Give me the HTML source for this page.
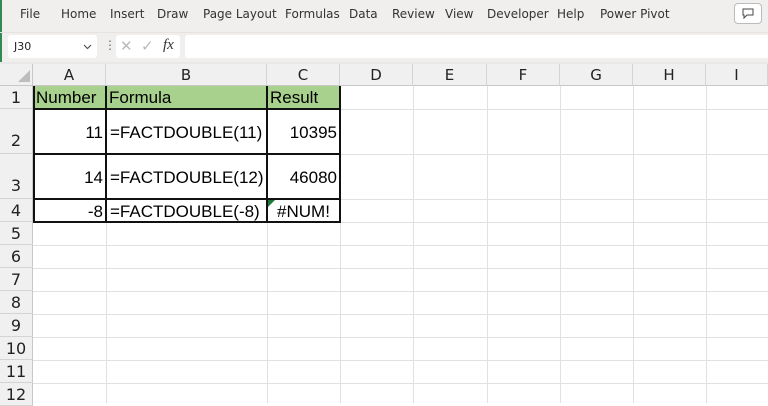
<!DOCTYPE html>
<html><head><meta charset="utf-8"><style>
*{margin:0;padding:0;box-sizing:border-box}
body{width:768px;height:403px;overflow:hidden;background:#fff;position:relative;font-family:"Liberation Sans",sans-serif}
.a{position:absolute}
.tab{position:absolute;top:7px;color:#333;font-family:"DejaVu Sans","Liberation Sans",sans-serif;font-size:12px}
.ch{position:absolute;top:64px;height:22px;background:#f0f0f0;border-right:1px solid #d4d4d4;border-bottom:1px solid #c8c8c8;text-align:center;line-height:22px;color:#222;font-family:"DejaVu Sans",sans-serif;font-size:15px}
.rh{position:absolute;left:0;width:33px;background:#f0f0f0;border-bottom:1px solid #d4d4d4;border-right:1px solid #c8c8c8;font-size:16px;color:#222;text-align:center;font-family:"DejaVu Sans",sans-serif}
.hl{position:absolute;left:33px;right:0;height:1px;background:#e1e1e1}
.vl{position:absolute;top:86px;bottom:0;width:1px;background:#e1e1e1}
.c{position:absolute;font-size:17px;color:#000;white-space:nowrap;padding:0 3px}
</style></head><body>
<div class="a" style="left:0;top:0;width:768px;height:62px;background:#f1efed"></div>
<div class="a" style="left:0;top:0;width:2px;height:403px;background:#2f8a53"></div>
<span class="tab" style="left:20px">File</span>
<span class="tab" style="left:61px">Home</span>
<span class="tab" style="left:110px">Insert</span>
<span class="tab" style="left:157px">Draw</span>
<span class="tab" style="left:203px">Page Layout</span>
<span class="tab" style="left:285px">Formulas</span>
<span class="tab" style="left:349px">Data</span>
<span class="tab" style="left:392px">Review</span>
<span class="tab" style="left:445px">View</span>
<span class="tab" style="left:487px">Developer</span>
<span class="tab" style="left:557px">Help</span>
<span class="tab" style="left:600px">Power Pivot</span>
<div class="a" style="left:734px;top:3px;width:28px;height:21px;border:1px solid #bbb;border-radius:4px;background:#fff"></div>
<svg class="a" style="left:742px;top:8px" width="12" height="11" viewBox="0 0 12 11"><path d="M1 1h10v6H5l-3 3V7H1z" fill="none" stroke="#444" stroke-width="1"/></svg>
<div class="a" style="left:0;top:32px;width:768px;height:1px;background:#e6e3e0"></div>
<div class="a" style="left:8px;top:35px;width:89px;height:23px;background:#fff;border-radius:3px;font-size:11px;line-height:23px;padding-left:6px;color:#222;font-family:'DejaVu Sans',sans-serif">J30</div>
<svg class="a" style="left:83px;top:44px" width="9" height="6"><path d="M1 1l3.5 3.5L8 1" fill="none" stroke="#555" stroke-width="1.2"/></svg>
<div class="a" style="left:104px;top:38px;font-size:12px;color:#666">&#8942;</div>
<div class="a" style="left:116px;top:35px;width:64px;height:23px;background:#fff;border-radius:3px"></div>
<div class="a" style="left:120px;top:37px;font-size:15px;color:#bbb">&#x2715;</div>
<div class="a" style="left:141px;top:37px;font-size:15px;color:#bbb">&#x2713;</div>
<div class="a" style="left:163px;top:37px;font-size:15px;font-style:italic;font-family:'Liberation Serif',serif;color:#333">fx</div>
<div class="a" style="left:185px;top:35px;width:583px;height:23px;background:#fff;border-radius:3px 0 0 3px"></div>
<div class="a" style="left:0;top:62px;width:768px;height:2px;background:#e8e8e8"></div>
<div class="a" style="left:0;top:64px;width:33px;height:22px;background:#f0f0f0;border-right:1px solid #c8c8c8;border-bottom:1px solid #c8c8c8"></div>
<svg class="a" style="left:18px;top:70px" width="12" height="12"><path d="M12 0V12H0z" fill="#bdbdbd"/></svg>
<div class="ch" style="left:33px;width:73px">A</div>
<div class="ch" style="left:106px;width:161px">B</div>
<div class="ch" style="left:267px;width:73px">C</div>
<div class="ch" style="left:340px;width:73px">D</div>
<div class="ch" style="left:413px;width:74px">E</div>
<div class="ch" style="left:487px;width:73px">F</div>
<div class="ch" style="left:560px;width:73px">G</div>
<div class="ch" style="left:633px;width:73px">H</div>
<div class="ch" style="left:706px;width:62px">I</div>
<div class="vl" style="left:106px"></div><div class="vl" style="left:267px"></div><div class="vl" style="left:340px"></div><div class="vl" style="left:413px"></div><div class="vl" style="left:487px"></div><div class="vl" style="left:560px"></div><div class="vl" style="left:633px"></div><div class="vl" style="left:706px"></div>
<div class="hl" style="top:109px"></div><div class="hl" style="top:154px"></div><div class="hl" style="top:199px"></div><div class="hl" style="top:222px"></div><div class="hl" style="top:245px"></div><div class="hl" style="top:268px"></div><div class="hl" style="top:291px"></div><div class="hl" style="top:314px"></div><div class="hl" style="top:337px"></div><div class="hl" style="top:360px"></div><div class="hl" style="top:383px"></div>
<div class="rh" style="top:86px;height:23px;line-height:23px">1</div>
<div class="rh" style="top:109px;height:45px;line-height:64px">2</div>
<div class="rh" style="top:154px;height:45px;line-height:64px">3</div>
<div class="rh" style="top:199px;height:23px;line-height:23px">4</div>
<div class="rh" style="top:222px;height:23px;line-height:23px">5</div>
<div class="rh" style="top:245px;height:23px;line-height:23px">6</div>
<div class="rh" style="top:268px;height:23px;line-height:23px">7</div>
<div class="rh" style="top:291px;height:23px;line-height:23px">8</div>
<div class="rh" style="top:314px;height:23px;line-height:23px">9</div>
<div class="rh" style="top:337px;height:23px;line-height:23px">10</div>
<div class="rh" style="top:360px;height:23px;line-height:23px">11</div>
<div class="rh" style="top:383px;height:23px;line-height:23px">12</div>
<div class="a" style="left:33px;top:86px;width:308px;height:23px;background:#a9d18e"></div>
<div class="a" style="left:33px;top:86px;width:308px;height:137px;border:2px solid #111;border-top:none"></div>
<div class="a" style="left:105px;top:86px;width:2px;height:137px;background:#111"></div>
<div class="a" style="left:266px;top:86px;width:2px;height:137px;background:#111"></div>
<div class="a" style="left:33px;top:108px;width:308px;height:2px;background:#111"></div>
<div class="a" style="left:33px;top:153px;width:308px;height:2px;background:#111"></div>
<div class="a" style="left:33px;top:198px;width:308px;height:2px;background:#111"></div>
<svg class="a" style="left:268px;top:200px" width="7" height="7"><path d="M0 0H7L0 7z" fill="#1e7a3c"/></svg>
<div class="c" style="left:33px;top:88px">Number</div>
<div class="c" style="left:106px;top:88px">Formula</div>
<div class="c" style="left:267px;top:88px">Result</div>
<div class="c" style="left:33px;width:73px;text-align:right;top:123px">11</div>
<div class="c" style="left:107px;top:123px">=FACTDOUBLE(11)</div>
<div class="c" style="left:267px;width:73px;text-align:right;top:123px">10395</div>
<div class="c" style="left:33px;width:73px;text-align:right;top:168px">14</div>
<div class="c" style="left:107px;top:168px">=FACTDOUBLE(12)</div>
<div class="c" style="left:267px;width:73px;text-align:right;top:168px">46080</div>
<div class="c" style="left:33px;width:73px;text-align:right;top:202px">-8</div>
<div class="c" style="left:107px;top:202px">=FACTDOUBLE(-8)</div>
<div class="c" style="left:267px;width:73px;text-align:center;top:202px">#NUM!</div>
</body></html>
